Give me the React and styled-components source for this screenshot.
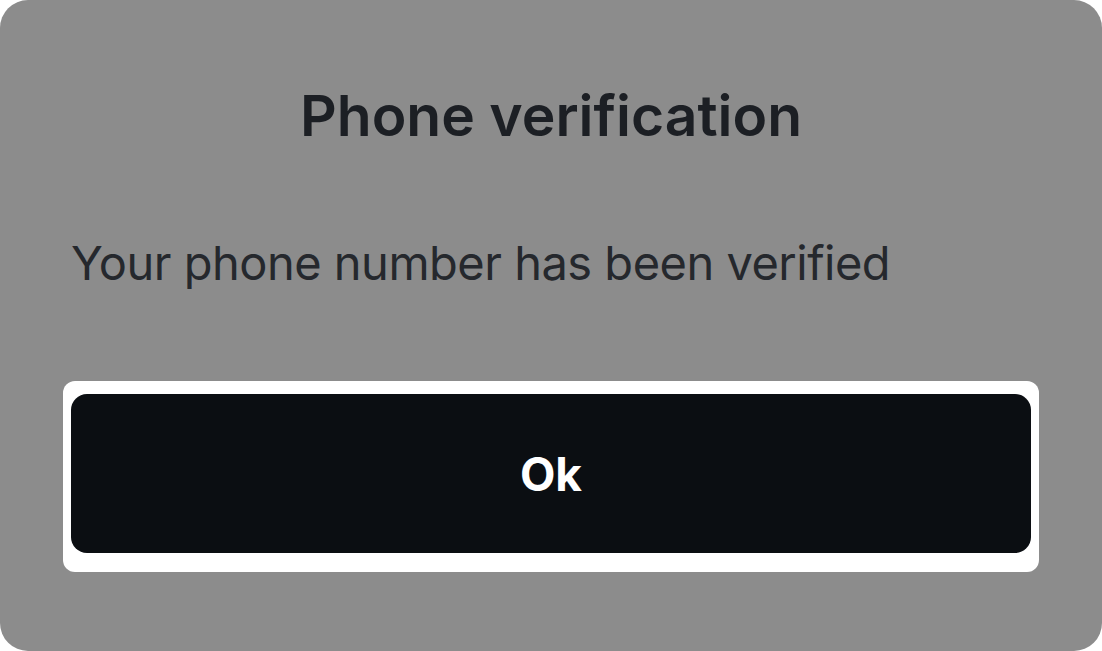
import React from "react";
import styled, { createGlobalStyle } from "styled-components";

const Global = createGlobalStyle`
  html, body { margin: 0; padding: 0; background: #ffffff; }
  body { font-family: Inter, "Noto Sans", sans-serif; }
`;

const Card = styled.div`
  box-sizing: border-box;
  width: 1102px;
  height: 651px;
  background: #8c8c8c;
  border-radius: 28px;
  padding: 80px 63px 0;
  display: flex;
  flex-direction: column;
`;

const Title = styled.h1`
  margin: 0;
  text-align: center;
  font-family: Inter, "Noto Sans", sans-serif;
  font-size: 57px;
  font-weight: 600;
  line-height: 72px;
  color: #1c1f24;
  letter-spacing: 0;
`;

const Message = styled.p`
  margin: 83px 0 0;
  padding-left: 8px;
  font-size: 47px;
  font-weight: 400;
  line-height: 56px;
  letter-spacing: -0.5px;
  color: #25282d;
`;

const ButtonFrame = styled.div`
  margin-top: 90px;
  background: #ffffff;
  border-radius: 12px;
  padding: 13px 8px 19px;
`;

const OkButton = styled.button`
  display: block;
  width: 100%;
  height: 159px;
  border: none;
  border-radius: 16px;
  background: #0b0e12;
  color: #ffffff;
  font-family: Inter, "Noto Sans", sans-serif;
  font-size: 46px;
  font-weight: 700;
  cursor: pointer;
`;

export default function App() {
  return (
    <>
      <Global />
      <Card>
        <Title>Phone verification</Title>
        <Message>Your phone number has been verified</Message>
        <ButtonFrame>
          <OkButton>Ok</OkButton>
        </ButtonFrame>
      </Card>
    </>
  );
}
